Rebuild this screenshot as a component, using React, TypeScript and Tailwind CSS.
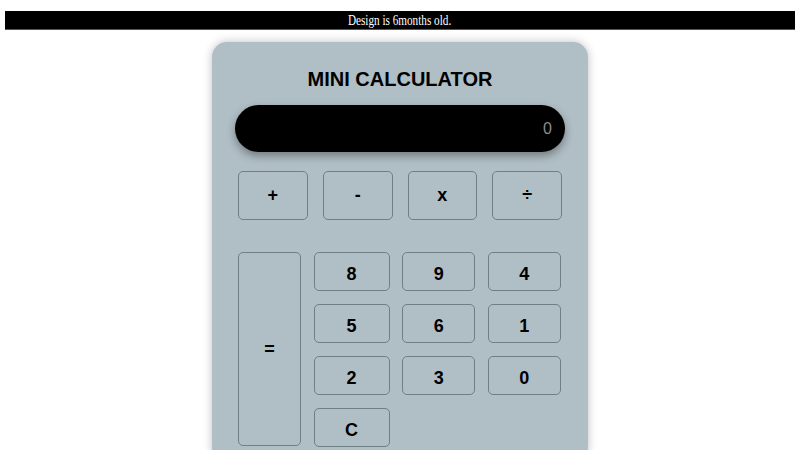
import React from "react";

const btn =
  "flex items-center justify-center rounded-[5px] border border-[#6f7f86] bg-[#b0bec5] text-[18px] font-bold text-black";

export default function App() {
  const nums = ["8", "9", "4", "5", "6", "1", "2", "3", "0"];
  return (
    <div className="min-h-[450px] bg-white px-[5px] pt-[11px] font-['Liberation_Sans',Arial,sans-serif]">
      <div className="flex h-[19px] items-center justify-center border-b border-[#555] bg-black pt-[1px] font-['Liberation_Serif','Times_New_Roman',serif] text-[14px] text-white">
        <span className="inline-block scale-x-[0.8] whitespace-nowrap">Design is 6months old.</span>
      </div>
      <div className="mx-auto mt-[12px] flex h-[420px] w-[376px] flex-col items-center rounded-[15px] bg-[#b0bec5] pt-[26px] shadow-[0_0_10px_rgba(0,0,0,0.25)]">
        <h1 className="text-[20px] font-bold leading-[23px] text-black">MINI CALCULATOR</h1>
        <div className="mt-[14px] flex h-[47px] w-[330px] items-center justify-end rounded-full bg-black pr-[13px] pt-[1px] text-[16px] text-[#8c8c8c] shadow-[0_4px_8px_rgba(0,0,0,0.35)]">
          0
        </div>
        <div className="mt-[19px] flex w-[324px] gap-[15px]">
          {["+", "-", "x", "÷"].map((o) => (
            <div key={o} className={`${btn} h-[49px] w-[70px]`}>
              {o}
            </div>
          ))}
        </div>
        <div className="mt-[32px] flex w-[324px] gap-[12.6px]">
          <div className={`${btn} h-[194px] w-[63px]`}>=</div>
          <div className="grid grid-cols-[76px_73px_73px] gap-x-[12.6px] gap-y-[13px]">
            {nums.map((n) => (
              <div key={n} className={`${btn} h-[39px] pt-[5px]`}>
                {n}
              </div>
            ))}
            <div className={`${btn} h-[39px] pt-[6px]`}>C</div>
          </div>
        </div>
      </div>
    </div>
  );
}
